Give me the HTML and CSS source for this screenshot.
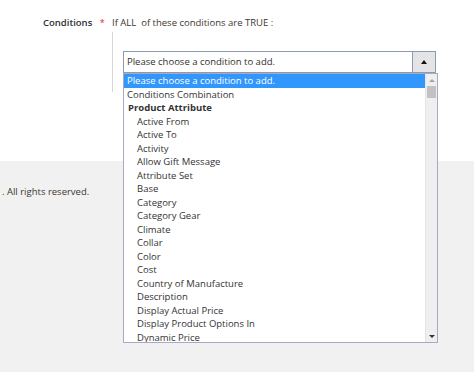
FILE: index.html
```html
<!DOCTYPE html>
<html>
<head>
<meta charset="utf-8">
<link rel="stylesheet" href="styles.css">
</head>
<body>
<div class="top">
  <div class="field">
    <div class="label">Conditions <span class="req">*</span></div>
    <div class="control">
      <div class="rule-head">If ALL&nbsp; of these conditions are TRUE :</div>
      <div class="rule-tree">
        <div class="select">
          <span class="select-text">Please choose a condition to add.</span>
          <span class="select-btn"><span class="tri-up"></span></span>
          <div class="dropdown">
            <div class="options">
              <div class="opt selected">Please choose a condition to add.</div>
              <div class="opt">Conditions Combination</div>
              <div class="grp">Product Attribute</div>
              <div class="opt sub">Active From</div>
              <div class="opt sub">Active To</div>
              <div class="opt sub">Activity</div>
              <div class="opt sub">Allow Gift Message</div>
              <div class="opt sub">Attribute Set</div>
              <div class="opt sub">Base</div>
              <div class="opt sub">Category</div>
              <div class="opt sub">Category Gear</div>
              <div class="opt sub">Climate</div>
              <div class="opt sub">Collar</div>
              <div class="opt sub">Color</div>
              <div class="opt sub">Cost</div>
              <div class="opt sub">Country of Manufacture</div>
              <div class="opt sub">Description</div>
              <div class="opt sub">Display Actual Price</div>
              <div class="opt sub">Display Product Options In</div>
              <div class="opt sub">Dynamic Price</div>
            </div>
            <div class="scrollbar">
              <span class="sb-arrow up"></span>
              <span class="sb-thumb"></span>
              <span class="sb-fill"></span>
              <span class="sb-arrow down"></span>
            </div>
          </div>
        </div>
      </div>
    </div>
  </div>
</div>
<div class="footer">
  <p class="copy">. All rights reserved.</p>
</div>
</body>
</html>
```
FILE: styles.css
```css
html, body {
  margin: 0;
  padding: 0;
  height: 100%;
}
body {
  font-family: "Open Sans", "Liberation Sans", sans-serif;
  font-size: 9.5px;
  color: #303030;
  background: #f1f1f1;
  display: flex;
  flex-direction: column;
  overflow: hidden;
}
.top {
  background: #fff;
  height: 161px;
  flex: none;
  position: relative;
  z-index: 1;
}
.field {
  display: flex;
  padding-top: 16px;
}
.label {
  width: 105px;
  box-sizing: border-box;
  padding-left: 43px;
  font-weight: 600;
  line-height: 14px;
  white-space: nowrap;
}
.req {
  color: #e02b27;
  font-weight: 400;
  font-size: 9px;
  margin-left: 5px;
}
.control {
  padding-left: 7px;
}
.rule-head {
  line-height: 14px;
  color: #41362f;
}
.rule-tree {
  margin-top: 2px;
  border-left: 1px solid #d6d6d6;
  padding: 19px 0 19px 10px;
}
.select {
  position: relative;
  width: 311px;
  height: 20px;
  border: 1px solid #8c9bb0;
  background: #fff;
  display: flex;
  align-items: center;
}
.select-text {
  flex: 1;
  padding-left: 3px;
  line-height: 20px;
  color: #303030;
}
.select-btn {
  width: 22px;
  height: 20px;
  border-left: 1px solid #8c9bb0;
  background: #e4e4e6;
  display: flex;
  align-items: center;
  justify-content: center;
}
.tri-up {
  width: 0;
  height: 0;
  border-left: 3px solid transparent;
  border-right: 3px solid transparent;
  border-bottom: 4px solid #111;
}
.dropdown {
  position: absolute;
  left: -1px;
  top: 21px;
  width: 313px;
  height: 268px;
  border: 1px solid #a9a9c4;
  background: #fff;
  display: flex;
  overflow: hidden;
}
.options {
  flex: 1;
  min-width: 0;
}
.opt, .grp {
  height: 13.5px;
  line-height: 13.5px;
  padding-left: 3px;
  white-space: nowrap;
  color: #333;
}
.grp {
  font-weight: 700;
  padding-left: 4px;
}
.opt.sub {
  padding-left: 13px;
}
.opt.selected {
  background: #3297fd;
  color: #fff;
}
.scrollbar {
  width: 11px;
  background: #efefef;
  border-left: 1px solid #e4e4e4;
  display: flex;
  flex-direction: column;
  align-items: center;
}
.sb-arrow {
  flex: none;
  width: 0;
  height: 0;
  border-left: 3px solid transparent;
  border-right: 3px solid transparent;
}
.sb-arrow.up {
  margin-top: 5px;
  border-bottom: 3px solid #a3a3a3;
}
.sb-arrow.down {
  margin-bottom: 4px;
  border-top: 3px solid #333;
}
.sb-thumb {
  flex: none;
  margin-top: 4px;
  width: 9px;
  height: 12px;
  background: #c2c2c2;
}
.sb-fill {
  flex: 1;
}
.footer {
  flex: 1;
  background: #f1f1f1;
}
.copy {
  margin: 24px 0 0 0;
  padding-left: 2px;
  line-height: 14px;
  color: #41362f;
}
```
